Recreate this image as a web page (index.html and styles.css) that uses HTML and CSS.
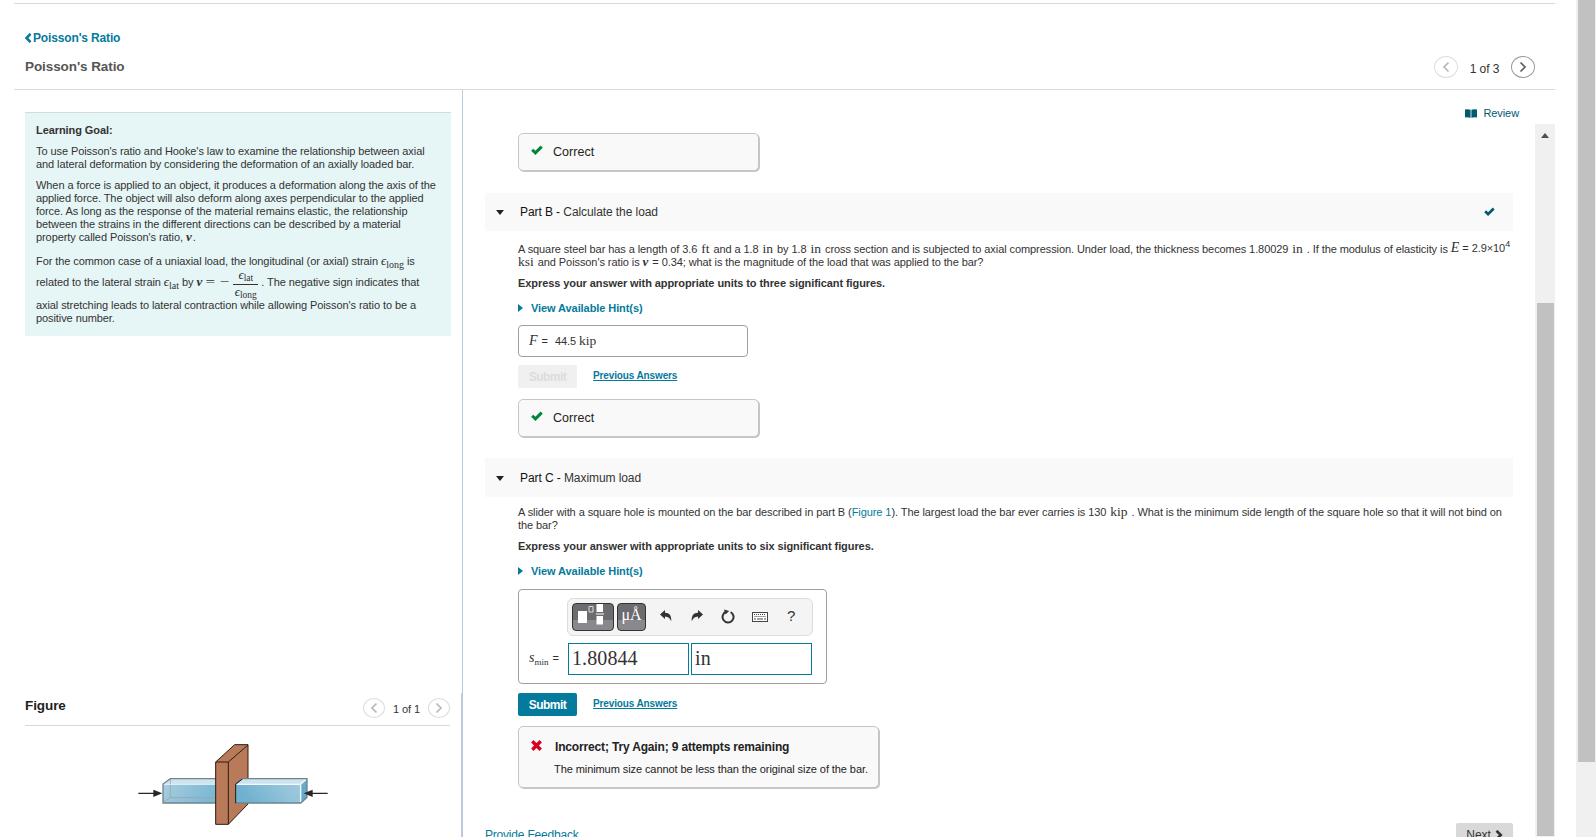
FILE: index.html
```
<!DOCTYPE html>
<html lang="en">
<head>
    <meta charset="UTF-8">
    <meta name="viewport" content="width=device-width, initial-scale=1.0">
    <title>Poisson's Ratio</title>
    <link rel="stylesheet" href="styles.css">
</head>
<body>
    <div class="page">
        <header class="item-header">
            <div class="titles">
                <a class="crumb"><svg width="8" height="10" viewBox="0 0 8 10"><path d="M5.500 .8 1.500 5l4 4.200" fill="none" stroke="#047a9c" stroke-width="2.600"/></svg><span>Poisson's Ratio</span></a>
                <h1>Poisson's Ratio</h1>
            </div>
            <nav class="pager">
                <span class="circle off"><svg width="8" height="12" viewBox="0 0 8 12"><path d="M6.500 1.500 2 6l4.500 4.500" fill="none" stroke="#b8b8b8" stroke-width="1.7"/></svg></span>
                <span class="count">1 of 3</span>
                <span class="circle"><svg width="8" height="12" viewBox="0 0 8 12"><path d="M1.500 1.500 6 6l-4.500 4.500" fill="none" stroke="#5a5f60" stroke-width="1.7"/></svg></span>
            </nav>
        </header>

        <div class="columns">
            <aside class="left">
                <section class="goal">
                    <p class="goal-title">Learning Goal:</p>
                    <p>To use Poisson's ratio and Hooke's law to examine the relationship between axial<br>and lateral deformation by considering the deformation of an axially loaded bar.</p>
                    <p>When a force is applied to an object, it produces a deformation along the axis of the<br>applied force. The object will also deform along axes perpendicular to the applied<br>force. As long as the response of the material remains elastic, the relationship<br>between the strains in the different directions can be described by a material<br>property called Poisson's ratio, <i class="math nu">ν</i>.</p>
                    <div class="strain">
                        <div>For the common case of a uniaxial load, the longitudinal (or axial) strain <span class="math"><i>ϵ</i><sub>long</sub></span> is</div>
                        <div class="formula">
                            <span>related to the lateral strain <span class="math"><i>ϵ</i><sub>lat</sub></span> by <span class="math"><i class="nu">ν</i><span class="op">=</span><span class="op">−</span></span></span>
                            <span class="fraction math"><span><i>ϵ</i><sub>lat</sub></span><span><i>ϵ</i><sub>long</sub></span></span>
                            <span class="after">. The negative sign indicates that</span>
                        </div>
                        <div>axial stretching leads to lateral contraction while allowing Poisson's ratio to be a<br>positive number.</div>
                    </div>
                </section>

                <section class="figure">
                    <div class="figure-head">
                        <h2>Figure</h2>
                        <nav class="pager small">
                            <span class="circle off"><svg width="8" height="12" viewBox="0 0 8 12"><path d="M6.500 1.500 2 6l4.500 4.500" fill="none" stroke="#b8b8b8" stroke-width="1.7"/></svg></span>
                            <span class="count">1 of 1</span>
                            <span class="circle off"><svg width="8" height="12" viewBox="0 0 8 12"><path d="M1.500 1.500 6 6l-4.500 4.500" fill="none" stroke="#b8b8b8" stroke-width="1.7"/></svg></span>
                        </nav>
                    </div>
                    <svg class="drawing" width="200" height="90" viewBox="0 0 600 270">
                        <defs>
                            <linearGradient id="bar1" x1="0" x2="1" y1="0" y2="0.3">
                                <stop offset="0" stop-color="#a9cfe0"/>
                                <stop offset="1" stop-color="#7db8d3"/>
                            </linearGradient>
                            <linearGradient id="bar2" x1="0" x2="1" y1="0.3" y2="0">
                                <stop offset="0" stop-color="#6fb1cf"/>
                                <stop offset="0.55" stop-color="#93c3da"/>
                                <stop offset="1" stop-color="#a5cce0"/>
                            </linearGradient>
                        </defs>
                        <!-- bar, left of the slider -->
                        <path d="M84 132 106 116H250V189H84z" fill="url(#bar1)"/>
                        <path d="M84 132 106 116H250V132z" fill="#cde3ee"/>
                        <path d="M84 187 106 173H245M106 118V173" fill="none" stroke="#9aa4ae" stroke-width="2.500"/>
                        <path d="M86 133H245" stroke="#e8f4fa" stroke-width="3"/>
                        <path d="M245 116H106L84 132V189H245" fill="none" stroke="#6f8490" stroke-width="4"/>
                        <!-- slider -->
                        <path d="M242 66 299 14H339V192L280 253H242z" fill="#b87a58" stroke="#2b1c14" stroke-width="3"/>
                        <path d="M242 66H280L339 15M280 66V253" fill="none" stroke="#2b1c14" stroke-width="3"/>
                        <!-- bar, right of the slider -->
                        <path d="M302 132 322 116H516V172L497 189H302z" fill="url(#bar2)"/>
                        <path d="M302 132 322 116H516L497 132z" fill="#cde3ee"/>
                        <path d="M497 132 516 116V172L497 189z" fill="#64abca"/>
                        <path d="M304 133H497L514 118M497 133V187" fill="none" stroke="#f1f9fc" stroke-width="4"/>
                        <path d="M302 132 322 116H516V172L497 189H302" fill="none" stroke="#6f8490" stroke-width="4"/>
                        <path d="M302 190V132L322 117" fill="none" stroke="#1c1c1c" stroke-width="3"/>
                        <!-- load arrows -->
                        <path d="M10 160H62M578 160H526" stroke="#2b2626" stroke-width="3.500"/>
                        <path d="M82 160 55 149V171zM506 160 533 149V171z" fill="#2b2626"/>
                    </svg>
                </section>
            </aside>

            <main class="right">
                <div class="review">
                    <svg width="12" height="9" viewBox="0 0 12 9"><path d="M0 .5Q3 0 5.600 .7V8.800Q3 8 0 8.500zM6.400 .7Q9 0 12 .5V8.500Q9 8 6.400 8.800z" fill="#005a70"/></svg>
                    <span>Review</span>
                </div>
                <div class="scroller">
                    <div class="content">
                        <div class="feedback"><svg class="tick" width="12" height="10" viewBox="0 0 12 10"><path d="M1.200 4.700 4.400 7.900 10.700 1.600" fill="none" stroke="#008638" stroke-width="3"/></svg><span class="correct">Correct</span></div>

                        <div class="part-head">
                            <span class="caret"></span>
                            <span class="part-name"><b>Part B - </b>Calculate the load</span>
                            <svg width="11" height="9" viewBox="0 0 12 10"><path d="M1.200 4.700 4.400 7.900 10.700 1.600" fill="none" stroke="#005a70" stroke-width="3"/></svg>
                        </div>
                        <div class="part-body part-b">
                            <p class="question">A square steel bar has a length of 3.6 <span class="unit">ft</span> and a 1.8 <span class="unit">in</span> by 1.8 <span class="unit">in</span> cross section and is subjected to axial compression. Under load, the thickness becomes 1.80029 <span class="unit">in</span> . If the modulus of elasticity is <span class="raised"><i class="math">E</i> = 2.9×10<sup>4</sup></span><br><span class="unit first">ksi</span> and Poisson's ratio is <i class="math nu">ν</i> = 0.34; what is the magnitude of the load that was applied to the bar?</p>
                            <p class="express">Express your answer with appropriate units to three significant figures.</p>
                            <p class="hint"><span class="arrow"></span>View Available Hint(s)</p>
                            <div class="answer"><i class="math">F</i><span class="eq">=</span>44.5 <span class="unit">kip</span></div>
                            <div class="actions">
                                <button class="submit disabled">Submit</button>
                                <a class="previous">Previous Answers</a>
                            </div>
                            <div class="feedback"><svg class="tick" width="12" height="10" viewBox="0 0 12 10"><path d="M1.200 4.700 4.400 7.900 10.700 1.600" fill="none" stroke="#008638" stroke-width="3"/></svg><span class="correct">Correct</span></div>
                        </div>

                        <div class="part-head tall">
                            <span class="caret"></span>
                            <span class="part-name"><b>Part C - </b>Maximum load</span>
                        </div>
                        <div class="part-body part-c">
                            <p class="question">A slider with a square hole is mounted on the bar described in part B (<a>Figure 1</a>). The largest load the bar ever carries is 130 <span class="unit">kip</span> . What is the minimum side length of the square hole so that it will not bind on<br>the bar?</p>
                            <p class="express">Express your answer with appropriate units to six significant figures.</p>
                            <p class="hint"><span class="arrow"></span>View Available Hint(s)</p>
                            <div class="editor">
                                <div class="toolbar">
                                    <span class="tool wide"><svg width="40" height="26" viewBox="0 0 40 26"><path d="M5 7h9v12H5zM23.500 0h6.500v8h-6.500zM23.500 12h6.500v8.500h-6.500zM23 9.500h8v1h-8z" fill="#fff"/><path d="M16 2.500h4v5.500h-4z" fill="none" stroke="#ddd"/></svg></span>
                                    <span class="tool">μÅ</span>
                                    <svg class="undo" width="12" height="12" viewBox="0 0 12 12"><path d="M0 4.500 5 0v2.800c4.500.2 6.500 2.500 6.300 8.500C10 8.300 8.500 6.500 5 6.400V9z" fill="#333"/></svg>
                                    <svg class="redo" width="12" height="12" viewBox="0 0 12 12"><path d="M12 4.500 7 0v2.800C2.500 3 .5 5.300.7 11.300 2 8.300 3.500 6.500 7 6.400V9z" fill="#333"/></svg>
                                    <svg class="reset" width="14" height="15" viewBox="0 0 14 15"><path d="M9.600 3.100A5.500 5.500 0 1 1 5.200 2.800" fill="none" stroke="#333" stroke-width="2"/><path d="M3 0.600 8.200 2 4.500 5.600z" fill="#333"/></svg>
                                    <svg class="keyboard" width="16" height="10" viewBox="0 0 16 10"><rect x=".5" y=".5" width="15" height="9" fill="#fff" stroke="#444"/><path d="M2 2.500h12M2.500 4.500h12" stroke="#444" stroke-dasharray="1 1"/><path d="M2 7h2M5 7h6M12 7h2" stroke="#444"/></svg>
                                    <span class="help">?</span>
                                </div>
                                <div class="fields">
                                    <span class="label"><span class="math"><i>s</i><sub>min</sub></span><span class="eq">=</span></span>
                                    <span class="field">1.80844</span>
                                    <span class="field">in</span>
                                </div>
                            </div>
                            <div class="actions">
                                <button class="submit">Submit</button>
                                <a class="previous">Previous Answers</a>
                            </div>
                            <div class="feedback wrong">
                                <svg class="cross" width="11" height="11" viewBox="0 0 11 11"><path d="M1.300 1.300 9.700 9.700M9.700 1.300 1.300 9.700" stroke="#db0020" stroke-width="3.400"/></svg>
                                <div>
                                    <p class="verdict">Incorrect; Try Again; 9 attempts remaining</p>
                                    <p>The minimum size cannot be less than the original size of the bar.</p>
                                </div>
                            </div>
                        </div>

                        <div class="bottom">
                            <a>Provide Feedback</a>
                            <button class="next">Next <svg width="8" height="10" viewBox="0 0 8 10"><path d="M1.500 .8 5.800 5 1.500 9.200" fill="none" stroke="#333" stroke-width="2.600"/></svg></button>
                        </div>
                    </div>
                    <div class="scrollbar inner"><div class="up"></div><div class="thumb"></div></div>
                </div>
            </main>
        </div>
    </div>
    <div class="scrollbar outer"><div class="thumb"></div></div>
</body>
</html>
```
FILE: styles.css
```
/* General */
* {
    box-sizing: border-box;
}

body {
    margin: 0;
    height: 837px;
    display: flex;
    overflow: hidden;
    background: #fff;
    color: #333;
    font-family: Arial, "Liberation Sans", sans-serif;
    font-size: 11px;
    line-height: 13px;
    letter-spacing: -0.08px;
    white-space: nowrap;
}

h1, h2, p {
    margin: 0;
}

svg {
    display: block;
    flex: none;
}

a {
    color: #047a9c;
}

sub, sup {
    line-height: 0;
}

.math, .unit {
    font-family: "Liberation Serif", serif;
    font-size: 14px;
    line-height: 0;
    letter-spacing: 0;
}

.unit {
    margin: 0 1px;
    font-size: 13.5px;
}

.unit.first {
    margin-left: 0;
}

.math sub {
    font-size: 10px;
    vertical-align: -3px;
}

.nu {
    margin-right: 1px;
    font-size: 13px;
    font-weight: bold;
}

.page {
    width: 1541px;
    margin: 3px 21px 0 14px;
    display: flex;
    flex-direction: column;
}

/* Header */
.item-header {
    height: 87px;
    flex: none;
    display: flex;
    justify-content: space-between;
    border-top: 1px solid #d9d9d9;
    border-bottom: 1px solid #d9d9d9;
    padding: 26px 20px 0 11px;
}

.crumb {
    display: flex;
    align-items: center;
    height: 16px;
    font-size: 12px;
    font-weight: bold;
    letter-spacing: -0.15px;
}

h1 {
    margin-top: 13px;
    font-size: 13.5px;
    line-height: 16px;
    color: #555;
}

.pager {
    display: flex;
    align-items: center;
    height: 22px;
    margin-top: 26px;
    font-size: 12px;
}

.circle {
    width: 24px;
    height: 22px;
    display: flex;
    align-items: center;
    justify-content: center;
    border: 1px solid #999;
    border-radius: 50%;
}

.circle.off {
    border-color: #ddd;
}

.count {
    width: 53px;
    padding-top: 5px;
    text-align: center;
}

/* Columns */
.columns {
    flex: 1;
    min-height: 0;
    display: flex;
    /* wider splitter beside the figure */
    background: linear-gradient(#b9cbdc, #b9cbdc) 447px 603px / 1px 144px no-repeat;
}

.left {
    width: 448px;
    flex: none;
    display: flex;
    flex-direction: column;
    justify-content: space-between;
    padding: 22px 0 0 11px;
}

.goal {
    width: 426px;
    height: 224px;
    padding: 11px 11px 0;
    background: #e6f6f6;
    border-top: 1px solid #d5dada;
}

.goal p {
    margin-bottom: 8px;
}

.goal .goal-title {
    font-weight: bold;
}

.strain {
    padding-top: 3px;
}

.strain .math {
    font-size: 13px;
}

.formula {
    height: 31px;
    display: flex;
    align-items: center;
}

.formula > span:first-child {
    margin-top: -2px;
}

.formula > .after {
    margin-top: -2px;
}

.op {
    display: inline-block;
    width: 10px;
    margin-left: 4px;
    transform: scaleX(1.3);
}

.fraction {
    width: 25px;
    margin: 0 3px 0 2px;
}

.fraction > span {
    display: block;
    height: 15px;
    line-height: 11px;
    text-align: center;
}

.fraction > span:last-child {
    border-top: 1px solid #333;
    line-height: 14px;
}

.fraction sub {
    font-size: 9.5px;
    vertical-align: -2px;
}

.figure {
    height: 144px;
}

.figure-head {
    display: flex;
    justify-content: space-between;
    width: 425px;
    height: 33px;
    border-bottom: 1px solid #d9d9d9;
}

h2 {
    margin-top: 5px;
    font-size: 13.5px;
    line-height: 16px;
    color: #222;
}

.small {
    height: 20px;
    margin-top: 5px;
    font-size: 11px;
}

.small .circle {
    width: 22px;
    height: 20px;
}

.small .count {
    width: 43px;
    padding-top: 3px;
}

.drawing {
    margin: 14px 0 0 110px;
}

.right {
    flex: 1;
    display: flex;
    flex-direction: column;
    border-left: 1px solid #b9cbdc;
}

.review {
    display: flex;
    align-items: flex-start;
    justify-content: flex-end;
    gap: 6px;
    height: 34px;
    padding: 12px 36px 0 0;
    color: #005a70;
}

.review svg {
    margin-top: 7px;
}

.review span {
    margin-top: 5px;
}

.scroller {
    flex: 1;
    min-height: 0;
    display: flex;
    justify-content: space-between;
}

.content {
    width: 1028px;
    margin-left: 22px;
    padding-top: 9px;
}

.content > .feedback {
    margin: 0 0 22px 33px;
}

.feedback {
    width: 241px;
    height: 38px;
    display: flex;
    align-items: center;
    padding: 0 0 4px 12px;
    border: 1px solid #c6c6c6;
    border-radius: 5px;
    box-shadow: 1px 1px 0 #c6c6c6;
    background: #f9f9f9;
    font-size: 12px;
    color: #222;
}

.feedback .tick {
    margin-right: 10px;
}

.correct {
    padding-top: 5px;
    font-size: 12.5px;
    letter-spacing: 0.05px;
}

.part-head {
    height: 38px;
    display: flex;
    align-items: center;
    padding: 0 18px 0 11px;
    background: #f9f9f9;
    font-size: 12px;
}

.part-head.tall {
    height: 39px;
    padding-top: 1px;
}

.part-head b {
    font-weight: normal;
    color: #111;
}

.part-head svg {
    margin: 0 0 2px auto;
}

.caret {
    border: 4.5px solid transparent;
    border-top: 5px solid #222;
    border-bottom: 0;
}

.part-name {
    margin-left: 16px;
}

.part-body {
    padding-left: 33px;
}

.question {
    height: 26px;
}

.part-b .question {
    margin-top: 12px;
}

.part-c .question {
    margin-top: 9px;
}

.raised {
    position: relative;
    top: -1px;
}

.raised sup {
    font-size: 9px;
}

.express {
    margin-top: 8px;
    font-weight: bold;
}

.hint {
    display: flex;
    align-items: center;
    gap: 8px;
    margin-top: 12px;
    font-weight: bold;
    color: #047a9c;
}

.arrow {
    margin-bottom: 1px;
    border: 4.5px solid transparent;
    border-left: 5px solid #047a9c;
    border-right: 0;
}

.answer {
    width: 230px;
    height: 32px;
    margin-top: 10px;
    padding: 9px 10px;
    border: 1px solid #a0a0a0;
    border-radius: 4px;
}

.answer .unit {
    margin: 0;
}

.eq {
    margin: 0 7px 0 4px;
}

.actions {
    display: flex;
    align-items: center;
    gap: 16px;
    height: 23px;
    margin: 8px 0 11px;
}

.submit {
    width: 59px;
    height: 23px;
    padding: 0;
    border: 0;
    border-radius: 2px;
    background: #047a9c;
    color: #fff;
    font: bold 12px Arial, "Liberation Sans", sans-serif;
    letter-spacing: -0.5px;
}

.submit.disabled {
    background: #f0f0f0;
    color: #dcdcdc;
}

.previous {
    margin-bottom: 2px;
    font-size: 10px;
    font-weight: bold;
    letter-spacing: -0.13px;
    text-decoration: underline;
}

.part-b .feedback {
    margin-bottom: 21px;
}

.editor {
    width: 309px;
    height: 95px;
    margin-top: 11px;
    padding: 8px 0 0 9px;
    border: 1px solid #a0a0a0;
    border-radius: 4px;
}

.toolbar {
    width: 246px;
    height: 38px;
    margin-left: 39px;
    display: flex;
    align-items: center;
    padding: 0 0 2px 4px;
    border: 1px solid #ddd;
    border-radius: 6px;
    background: #f4f4f4;
}

.tool {
    width: 29px;
    height: 28px;
    margin: 1px 3px 0 0;
    border: 1px solid #333;
    border-radius: 4px;
    background: linear-gradient(#6b6b70 0 62%, #88888d 62%);
    color: #fff;
    font: 16px/22px "Liberation Serif", serif;
    text-align: center;
}

.tool.wide {
    width: 42px;
}

.undo {
    margin: 0 19px 0 11px;
}

.redo {
    margin-right: 18px;
}

.reset {
    margin-right: 17px;
}

.keyboard {
    margin: 2px 19px 0 0;
}

.help {
    margin-bottom: 2px;
    font-size: 15px;
}

.fields {
    display: flex;
    margin-top: 7px;
}

.label {
    width: 40px;
    padding: 9px 0 0 1px;
}

.label .math sub {
    font-size: 9px;
}

.field {
    width: 121px;
    height: 32px;
    flex: none;
    margin-right: 2px;
    padding: 0 3px;
    border: 1px solid #047a9c;
    font: 20px/29px "Liberation Serif", serif;
    letter-spacing: 0.1px;
}

.part-c .actions {
    margin: 9px 0 10px;
}

.wrong {
    width: 361px;
    height: 62px;
    align-items: flex-start;
    padding-top: 13px;
}

.cross {
    margin-right: 12px;
}

.verdict {
    margin: 1px 0 9px 1px;
    font-size: 12px;
    font-weight: bold;
    letter-spacing: -0.16px;
}

.feedback p + p {
    font-size: 11px;
}

.bottom {
    display: flex;
    justify-content: space-between;
    margin-top: 35px;
    font-size: 12px;
}

.bottom a {
    padding-top: 6px;
    letter-spacing: -0.2px;
}

.next {
    width: 57px;
    height: 24px;
    display: flex;
    align-items: center;
    justify-content: center;
    gap: 4px;
    padding: 0;
    border: 0;
    border-radius: 2px;
    background: #d9d9d9;
    color: #333;
    font: 12px Arial, "Liberation Sans", sans-serif;
    letter-spacing: -0.1px;
}

/* Scrollbars */
.scrollbar {
    width: 20px;
    flex: none;
    background: #f0f0f0;
}

.scrollbar .thumb {
    width: 17px;
    margin-left: 2px;
    background: #c1c1c1;
}

.inner {
    height: 713px;
}

.up {
    width: 0;
    margin: 9px 0 165px 6px;
    border: 4.5px solid transparent;
    border-bottom: 5px solid #505050;
    border-top: 0;
}

.inner .thumb {
    height: 533px;
}

.outer .thumb {
    height: 762px;
}
```
